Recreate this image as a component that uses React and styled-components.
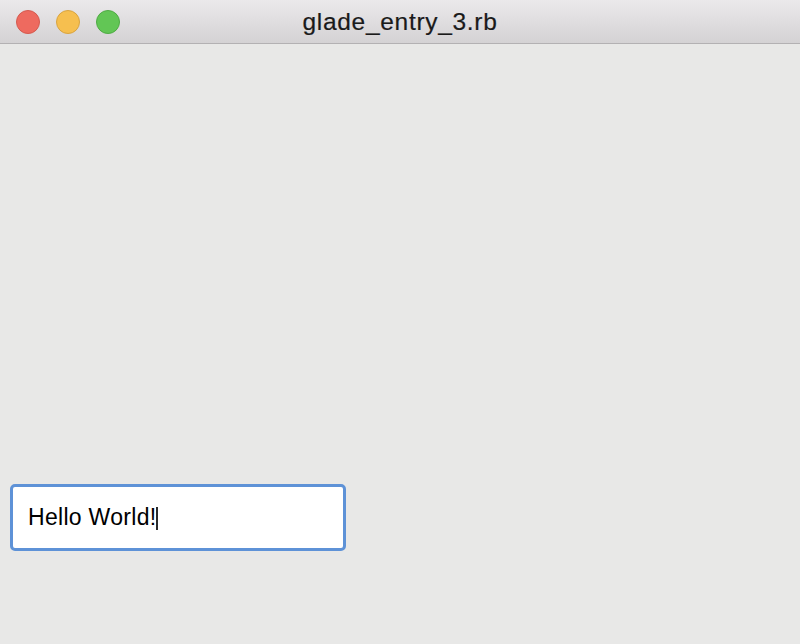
import React from "react";
import styled, { createGlobalStyle } from "styled-components";

const Global = createGlobalStyle`
  html, body { margin: 0; padding: 0; background: #e8e8e7; }
  body { font-family: "Liberation Sans", Arial, sans-serif; }
`;

const Window = styled.div`
  width: 800px;
  height: 644px;
  display: flex;
  flex-direction: column;
  background: #e8e8e7;
  overflow: hidden;
`;

const TitleBar = styled.div`
  position: relative;
  height: 43px;
  flex: none;
  display: flex;
  align-items: center;
  justify-content: center;
  background: linear-gradient(#ebe9eb, #d4d2d4);
  border-bottom: 1px solid #b3b1b3;
`;

const Lights = styled.div`
  position: absolute;
  left: 16px;
  top: 10px;
  display: flex;
  gap: 16px;
`;

const Light = styled.span`
  width: 22px;
  height: 22px;
  border-radius: 50%;
  background: ${(p) => p.$fill};
  border: 1px solid ${(p) => p.$edge};
`;

const Title = styled.div`
  font-size: 24.5px;
  letter-spacing: 0.7px;
  color: #1a1a1a;
  line-height: 28px;
  margin-top: 1px;
  -webkit-text-stroke: 0.2px #1a1a1a;
`;

const Body = styled.div`
  flex: 1;
  padding: 440px 0 0 10px;
`;

const Entry = styled.div`
  box-sizing: border-box;
  width: 336px;
  height: 67px;
  border: 3px solid #5e92d7;
  border-radius: 5px;
  background: #ffffff;
  padding: 17px 0 0 15px;
  font-size: 23px;
  letter-spacing: 0.3px;
  line-height: 26px;
  color: #000;
  white-space: nowrap;
`;

const Caret = styled.span`
  display: inline-block;
  width: 1.5px;
  height: 23px;
  background: #2a2a2a;
  margin-left: 0;
  vertical-align: -5px;
`;

export default function App() {
  return (
    <>
      <Global />
      <Window>
        <TitleBar>
          <Lights>
            <Light $fill="#ee6a5f" $edge="#d55a4f" />
            <Light $fill="#f6bf4f" $edge="#d9a440" />
            <Light $fill="#62c655" $edge="#4fab44" />
          </Lights>
          <Title>glade_entry_3.rb</Title>
        </TitleBar>
        <Body>
          <Entry>
            Hello World!<Caret />
          </Entry>
        </Body>
      </Window>
    </>
  );
}
